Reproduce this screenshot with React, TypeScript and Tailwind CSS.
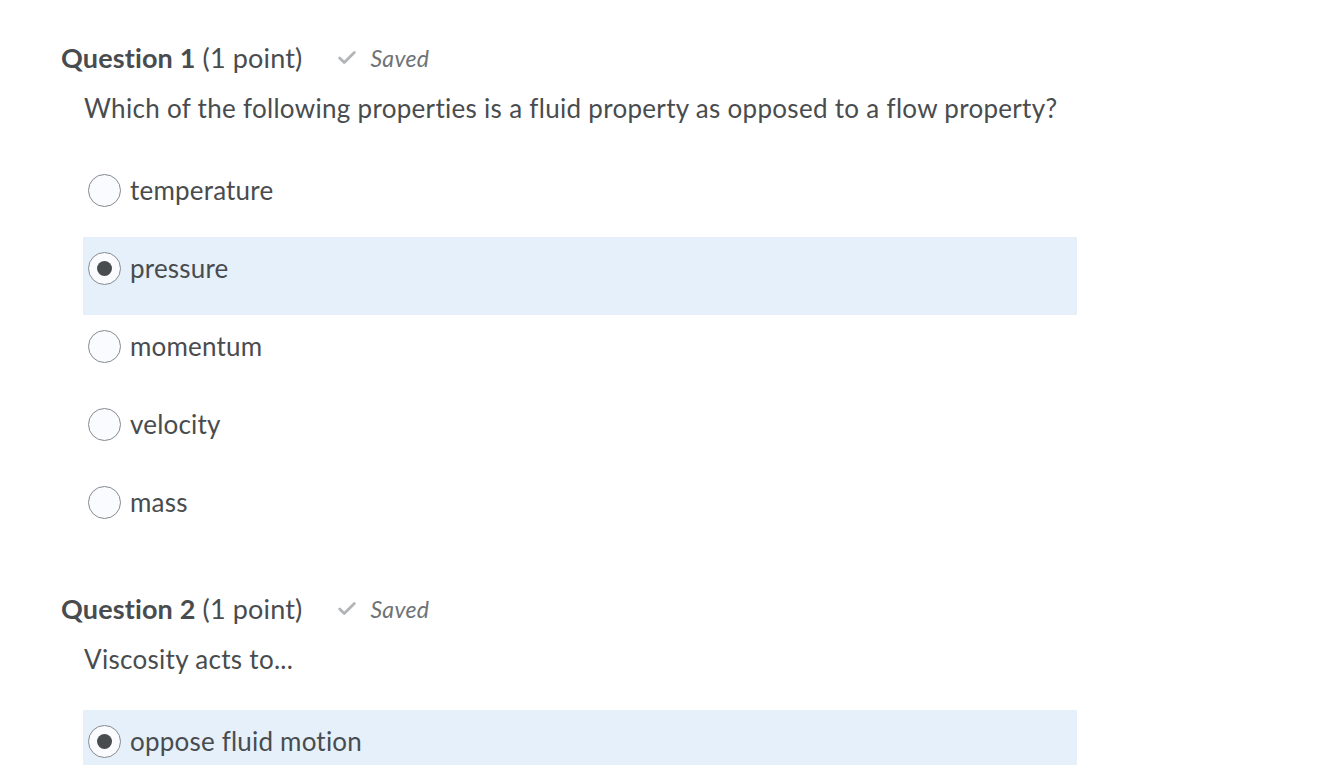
import { Check } from 'lucide-react';

type Option = { label: string; selected?: boolean };

function Radio({ selected }: { selected?: boolean }) {
  return (
    <span className="flex h-[33px] w-[33px] shrink-0 items-center justify-center rounded-full border border-[#868a8d] bg-[#f9fbff]">
      {selected && <span className="h-[15px] w-[15px] rounded-full bg-[#494c4e]" />}
    </span>
  );
}

function OptionRow({ label, selected }: Option) {
  return (
    <div className={`flex h-[78px] items-start pl-[5px] pt-[15px] ${selected ? 'bg-[#e6f0fb]' : ''}`}>
      <div className="flex h-[32px] items-center gap-[9px]">
        <Radio selected={selected} />
        <span className="text-[26px] leading-none tracking-[0.2px]">{label}</span>
      </div>
    </div>
  );
}

function Question({ num, text, options }: { num: number; text: string; options: Option[] }) {
  return (
    <section>
      <div className="flex h-[40px] items-center">
        <h2 className="text-[27px] tracking-[0.15px]">
          <span className="font-bold">Question {num}</span> (1 point)
        </h2>
        <div className="ml-[34px] flex items-center gap-[12px] text-[#6e7376]">
          <Check className="h-[22px] w-[22px] text-[#b1b5b8]" strokeWidth={3} />
          <span className="text-[23px] italic tracking-[0.3px]">Saved</span>
        </div>
      </div>
      <p className="ml-[23px] mt-[10px] h-[40px] text-[26px] leading-[40px] tracking-[0.3px]">{text}</p>
      <div className="ml-[22px] mt-[31px] w-[994px]">
        {options.map((o) => (
          <OptionRow key={o.label} {...o} />
        ))}
      </div>
    </section>
  );
}

export default function App() {
  return (
    <div className="h-[765px] overflow-hidden bg-white pl-[61px] pt-[38px] text-[#494c4e] font-['Lato',sans-serif] [font-variant-ligatures:none]">
      <Question
        num={1}
        text="Which of the following properties is a fluid property as opposed to a flow property?"
        options={[
          { label: 'temperature' },
          { label: 'pressure', selected: true },
          { label: 'momentum' },
          { label: 'velocity' },
          { label: 'mass' },
        ]}
      />
      <div className="mt-[40px]">
        <Question num={2} text="Viscosity acts to..." options={[{ label: 'oppose fluid motion', selected: true }]} />
      </div>
    </div>
  );
}
